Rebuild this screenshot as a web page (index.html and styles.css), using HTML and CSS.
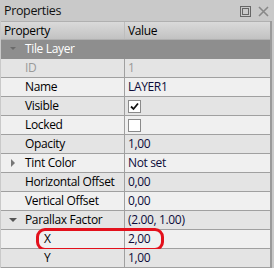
FILE: index.html
```html
<!DOCTYPE html>
<html lang="en">
<head>
  <meta charset="UTF-8">
  <title>Properties</title>
  <link rel="stylesheet" href="styles.css">
</head>
<body>
  <div class="panel">
    <!-- title bar -->
    <div class="title-bar">
      <span class="title">Properties</span>
      <span class="title-icons">
        <svg width="11" height="11" viewBox="0 0 11 11">
          <rect x="0.5" y="0.5" width="10" height="10" fill="none" stroke="#666"/>
          <rect x="2.5" y="2.5" width="6" height="6" fill="none" stroke="#666"/>
        </svg>
        <svg width="11" height="11" viewBox="0 0 11 11">
          <path d="M1 1L10 10M10 1L1 10" stroke="#888" stroke-width="1.6"/>
        </svg>
      </span>
    </div>

    <!-- property grid -->
    <div class="grid">
      <div class="row header">
        <div class="name">Property</div>
        <div class="value">Value</div>
      </div>

      <div class="row group">
        <div class="name"><span class="arrow open"></span>Tile Layer</div>
        <div class="value"></div>
      </div>

      <div class="row dark disabled">
        <div class="name">ID</div>
        <div class="value">1</div>
      </div>
      <div class="row">
        <div class="name">Name</div>
        <div class="value">LAYER1</div>
      </div>
      <div class="row dark">
        <div class="name">Visible</div>
        <div class="value"><span class="check on">
          <svg width="9" height="9" viewBox="0 0 9 9"><path d="M1 4.5L3.5 7L8 1.5" fill="none" stroke="#111" stroke-width="1.8"/></svg>
        </span></div>
      </div>
      <div class="row">
        <div class="name">Locked</div>
        <div class="value"><span class="check"></span></div>
      </div>
      <div class="row dark">
        <div class="name">Opacity</div>
        <div class="value">1,00</div>
      </div>
      <div class="row">
        <div class="name"><span class="arrow closed"></span>Tint Color</div>
        <div class="value">Not set</div>
      </div>
      <div class="row dark">
        <div class="name">Horizontal Offset</div>
        <div class="value">0,00</div>
      </div>
      <div class="row">
        <div class="name">Vertical Offset</div>
        <div class="value">0,00</div>
      </div>
      <div class="row dark">
        <div class="name"><span class="arrow open"></span>Parallax Factor</div>
        <div class="value">(2.00, 1.00)</div>
      </div>
      <div class="row sub">
        <div class="name">X</div>
        <div class="value">2,00</div>
        <span class="mark"></span>
      </div>
      <div class="row dark sub">
        <div class="name">Y</div>
        <div class="value">1,00</div>
      </div>
    </div>
  </div>
</body>
</html>
```

FILE: styles.css
```css
body {
  margin: 0;
  font-family: "Open Sans", "Noto Sans", sans-serif;
  font-size: 12px;
  letter-spacing: -0.35px;
  color: #000;
  background-color: #d4d4d4;
}

.panel {
  width: 274px;
  height: 268px;
  overflow: hidden;
  background-color: #c9c9c9;
}

.title-bar {
  display: flex;
  align-items: center;
  justify-content: space-between;
  height: 21px;
  padding: 0 5px 0 4px;
  box-sizing: border-box;
}

.title {
  color: #111;
  font-size: 12.5px;
}

.title-icons {
  display: flex;
  gap: 7px;
  margin-top: 1px;
}

.grid {
  margin-left: 1px;
  margin-right: 2px;
  border-right: 2px solid #9a9a9a;
}

.row {
  position: relative;
  display: grid;
  grid-template-columns: 124px 1fr;
  height: 19px;
  box-sizing: border-box;
  border-bottom: 1px solid #a0a0a0;
  background-color: #f0f0f0;
  line-height: 18px;
}

.row.dark {
  background-color: #e4e4e4;
}

.row .name {
  position: relative;
  padding-left: 24px;
  border-right: 1px solid #a0a0a0;
  white-space: nowrap;
}

.row .value {
  padding-left: 3px;
  color: #0c0c3a;
  white-space: nowrap;
}

.row.header {
  border-top: 1px solid #b0b0b0;
  border-bottom: 1px solid #b0b0b0;
  background: linear-gradient(#dadada, #c2c2c2);
  line-height: 17px;
}

.row.header .name {
  padding-left: 3px;
  border-right-color: #bdbdbd;
}

.row.header .value {
  color: #000;
}

.row.group {
  background-color: #8e8e8e;
  color: #fff;
  border-bottom-color: #8e8e8e;
}

.row.group .name {
  border-right: none;
}

.row.disabled .name,
.row.disabled .value {
  color: #9a9a9a;
}

.row.sub .name {
  padding-left: 43px;
}

.arrow {
  position: absolute;
  left: 8px;
  top: 7px;
  width: 0;
  height: 0;
}

.arrow.open {
  border-left: 4px solid transparent;
  border-right: 4px solid transparent;
  border-top: 4px solid #555;
}

.row.group .arrow.open {
  left: 9px;
  border-left-width: 3px;
  border-right-width: 3px;
  border-top: 3px solid #6a6a6a;
}

.arrow.closed {
  left: 10px;
  top: 5px;
  border-top: 4px solid transparent;
  border-bottom: 4px solid transparent;
  border-left: 4px solid #777;
}

.check {
  display: inline-flex;
  align-items: center;
  justify-content: center;
  width: 11px;
  height: 11px;
  margin-top: 3px;
  vertical-align: top;
  border: 1px solid #8a8a8a;
  background-color: #fff;
}

.mark {
  position: absolute;
  left: 35px;
  top: -2px;
  width: 122px;
  height: 17px;
  border: 3px solid #e3111c;
  border-radius: 9px;
  pointer-events: none;
}
```
